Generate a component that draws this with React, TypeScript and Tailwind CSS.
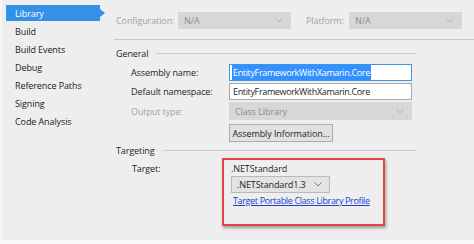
import React from 'react'

const font = { fontFamily: '"Open Sans", "Noto Sans", sans-serif' }

function Chevron({ color = '#9a9a9a' }: { color?: string }) {
  return (
    <svg width="8" height="5" viewBox="0 0 8 5" className="shrink-0">
      <polyline points="0.5,0.5 4,4 7.5,0.5" fill="none" stroke={color} strokeWidth="1" />
    </svg>
  )
}

function Select({ text, width, disabled }: { text: string; width: string; disabled?: boolean }) {
  return (
    <div
      className={`flex items-center justify-between h-[17px] pl-[5px] pr-[7px] border shrink-0 ${width} ${
        disabled ? 'bg-[#d7d7d7] border-[#d7d7d7] text-[#8c8c8c]' : 'bg-[#e3e3e3] border-[#b9b9b9] text-[#1e1e1e]'
      }`}
    >
      <span>{text}</span>
      <Chevron color={disabled ? '#b2b2b2' : '#7a7a7a'} />
    </div>
  )
}

function Heading({ text }: { text: string }) {
  return (
    <div className="flex items-center h-[14px] pl-[10px] pr-[57px]">
      <span className="text-[#1e1e1e]">{text}</span>
      <div className="flex-1 ml-[8px] border-t border-[#cbcbcb]" />
    </div>
  )
}

function FieldRow({ label, children, dim }: { label: string; children: React.ReactNode; dim?: boolean }) {
  return (
    <div className="flex items-center">
      <span className={`w-[123px] pl-[25px] ${dim ? 'text-[#a0a0a0]' : 'text-[#1e1e1e]'}`}>{label}</span>
      {children}
    </div>
  )
}

export default function App() {
  const nav = ['Library', 'Build', 'Build Events', 'Debug', 'Reference Paths', 'Signing', 'Code Analysis']

  return (
    <div
      className="w-[474px] h-[244px] bg-[#eeeeee] flex flex-col text-[9px] tracking-[-0.1px] leading-none whitespace-nowrap overflow-hidden"
      style={font}
    >
      <div className="flex-1 flex">
        {/* Sidebar */}
        <div className="w-[106px] shrink-0 pt-[4px] border-l-2 border-[#f6f6f6]">
          {nav.map((item, i) => (
            <div key={item} className="h-[18px] flex items-center">
              {i === 0 ? (
                <div className="relative ml-[4px] w-[94px] h-[16px] bg-[#3591e8] text-white flex items-center pl-[9px]">
                  {item}
                  <div className="absolute right-[-5px] top-[4px] w-0 h-0 border-y-[4px] border-y-transparent border-l-[5px] border-l-[#3591e8]" />
                </div>
              ) : (
                <span className="pl-[13px] text-[#1a1a1a]">{item}</span>
              )}
            </div>
          ))}
        </div>

        {/* Main */}
        <div className="flex-1 flex flex-col">
          <div className="flex items-center mt-[12px] pl-[10px] text-[#a3a3a3]">
            <span className="w-[62px]">Configuration:</span>
            <Select text="N/A" width="w-[113px]" disabled />
            <span className="ml-[15px] w-[43px]">Platform:</span>
            <Select text="N/A" width="w-[113px]" disabled />
          </div>

          <div className="mt-[10px] ml-[8px] border-t border-[#c9c9c9]" />

          <div className="mt-[6px]">
            <Heading text="General" />
          </div>

          <div className="mt-[4px] flex flex-col gap-[2px]">
            <FieldRow label="Assembly name:">
              <div className="w-[183px] h-[17px] bg-white border border-[#3c95e6] flex items-center pl-[2px]">
                <span className="bg-[#3390ff] text-white px-[1px] py-[3px] tracking-[-0.35px]">
                  EntityFrameworkWithXamarin.Core
                </span>
              </div>
            </FieldRow>
            <FieldRow label="Default namespace:">
              <div className="w-[183px] h-[17px] bg-white border border-[#a9a9a9] flex items-center pl-[3px] text-[#1e1e1e] tracking-[-0.35px]">
                EntityFrameworkWithXamarin.Core
              </div>
            </FieldRow>
            <FieldRow label="Output type:" dim>
              <Select text="Class Library" width="w-[183px] h-[18px]" disabled />
            </FieldRow>
            <div className="flex mt-[2px]">
              <div className="w-[123px]" />
              <div className="w-[104px] h-[18px] bg-[#e1e1e1] border border-[#adadad] flex items-center justify-center text-[#1e1e1e]">
                Assembly Information...
              </div>
            </div>
          </div>

          <div className="mt-[1px]">
            <Heading text="Targeting" />
          </div>

          <div className="flex items-start mt-[1px]">
            <span className="w-[116px] pl-[26px] mt-[6px] text-[#1e1e1e]">Target:</span>
            <div className="w-[163px] h-[68px] border-[2.5px] border-[#e0454a] shadow-[1px_2px_3px_rgba(0,0,0,0.35)] pl-[7px] pt-[4px] flex flex-col">
              <span className="text-[#1e1e1e]">.NETStandard</span>
              <div className="mt-[3px]">
                <Select text=".NETStandard1.3" width="w-[99px]" />
              </div>
              <span className="mt-[3px] ml-[2px] text-[#1a3fd0] underline tracking-[-0.35px]">
                Target Portable Class Library Profile
              </span>
            </div>
          </div>
        </div>
      </div>
      <div className="h-[4px] bg-[#f9f9f9]" />
    </div>
  )
}
